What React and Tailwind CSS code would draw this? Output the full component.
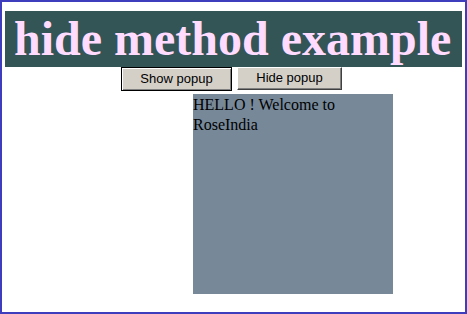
import React from "react";

export default function App() {
  return (
    <div className="h-[314px] w-[467px] border-2 border-[#3d3dbd] bg-white overflow-hidden">
      {/* Title bar */}
      <div className="mt-[9px] ml-[3px] w-[457px] h-[56px] bg-[#335555]">
        <h1
          className="pl-[9px] text-[48px] leading-[56px] font-bold text-[#ffdcff] whitespace-nowrap"
          style={{ fontFamily: '"Liberation Serif", "Times New Roman", serif' }}
        >
          hide method example
        </h1>
      </div>

      {/* Buttons */}
      <div
        className="flex gap-[5px] ml-[119px] text-[13px] text-black"
        style={{ fontFamily: '"Liberation Sans", Arial, sans-serif' }}
      >
        <button className="w-[111px] h-[24px] bg-[#d4d0c8] border border-black shadow-[inset_1px_1px_0_#ffffff,inset_-1px_-1px_0_#808080] leading-none pb-[2px]">
          Show popup
        </button>
        <button className="w-[105px] h-[23px] bg-[#d4d0c8] border border-t-white border-l-white border-r-[#404040] border-b-[#404040] shadow-[inset_-1px_-1px_0_#808080] leading-none pb-[2px]">
          Hide popup
        </button>
      </div>

      {/* Popup */}
      <div
        className="ml-[191px] mt-[3px] w-[200px] h-[200px] bg-[#778899] text-[16px] leading-[20px] text-black pt-[1px]"
        style={{ fontFamily: '"Liberation Serif", "Times New Roman", serif' }}
      >
        HELLO ! Welcome to RoseIndia
      </div>
    </div>
  );
}
